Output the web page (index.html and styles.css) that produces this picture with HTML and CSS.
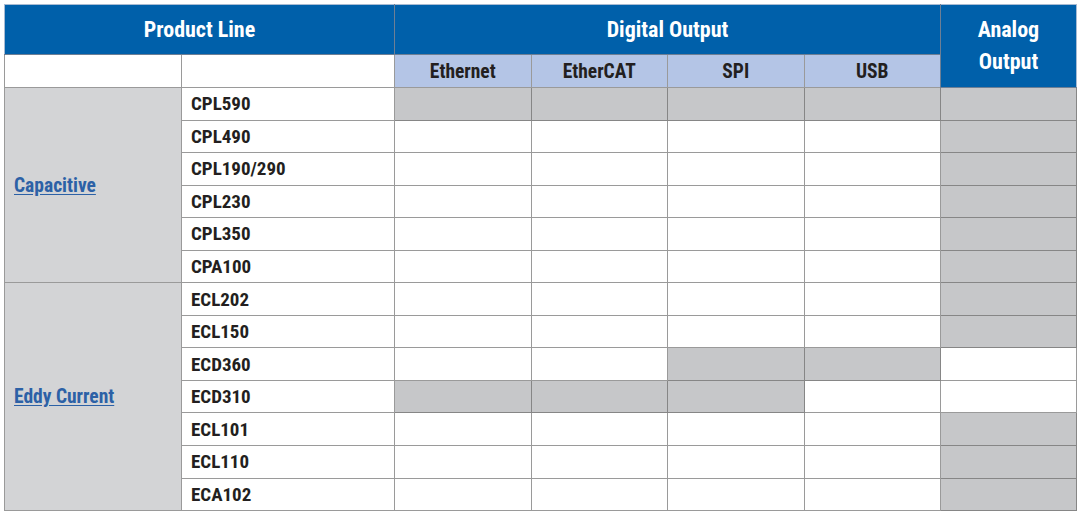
FILE: index.html
```html
<!DOCTYPE html>
<html>
<head>
<meta charset="utf-8">
<link rel="stylesheet" href="styles.css">
</head>
<body>
<table class="grid">
  <colgroup>
    <col class="c-group"><col class="c-model"><col class="c-d"><col class="c-d"><col class="c-d"><col class="c-d"><col class="c-a">
  </colgroup>
  <thead>
    <tr class="h1">
      <th colspan="2" class="blue">Product Line</th>
      <th colspan="4" class="blue">Digital Output</th>
      <th rowspan="2" class="blue analog">Analog<br>Output</th>
    </tr>
    <tr class="h2">
      <th class="blank"></th>
      <th class="blank"></th>
      <th class="sub">Ethernet</th>
      <th class="sub">EtherCAT</th>
      <th class="sub">SPI</th>
      <th class="sub">USB</th>
    </tr>
  </thead>
  <tbody>
    <tr>
      <td rowspan="6" class="group"><a href="#">Capacitive</a></td>
      <td class="model">CPL590</td>
      <td class="g"></td><td class="g"></td><td class="g"></td><td class="g"></td><td class="g"></td>
    </tr>
    <tr><td class="model">CPL490</td><td></td><td></td><td></td><td></td><td class="g"></td></tr>
    <tr><td class="model">CPL190/290</td><td></td><td></td><td></td><td></td><td class="g"></td></tr>
    <tr><td class="model">CPL230</td><td></td><td></td><td></td><td></td><td class="g"></td></tr>
    <tr><td class="model">CPL350</td><td></td><td></td><td></td><td></td><td class="g"></td></tr>
    <tr><td class="model">CPA100</td><td></td><td></td><td></td><td></td><td class="g"></td></tr>
    <tr>
      <td rowspan="7" class="group"><a href="#">Eddy Current</a></td>
      <td class="model">ECL202</td><td></td><td></td><td></td><td></td><td class="g"></td>
    </tr>
    <tr><td class="model">ECL150</td><td></td><td></td><td></td><td></td><td class="g"></td></tr>
    <tr><td class="model">ECD360</td><td></td><td></td><td class="g"></td><td class="g"></td><td></td></tr>
    <tr><td class="model">ECD310</td><td class="g"></td><td class="g"></td><td class="g"></td><td></td><td></td></tr>
    <tr><td class="model">ECL101</td><td></td><td></td><td></td><td></td><td class="g"></td></tr>
    <tr><td class="model">ECL110</td><td></td><td></td><td></td><td></td><td class="g"></td></tr>
    <tr><td class="model">ECA102</td><td></td><td></td><td></td><td></td><td class="g"></td></tr>
  </tbody>
</table>
</body>
</html>
```

FILE: styles.css
```css
html, body {
  margin: 0;
  padding: 0;
  background: #ffffff;
}
body {
  padding: 4px 4px 0 4px;
  font-family: Roboto, "Liberation Sans", sans-serif;
  font-stretch: 75%;
  font-weight: bold;
  color: #231f20;
}
.grid {
  border-collapse: collapse;
  table-layout: fixed;
  width: 1072px;
}
.c-group { width: 177px; }
.c-model { width: 213px; }
.c-d { width: 136.5px; }
.c-a { width: 136px; }

.grid th, .grid td {
  border: 1px solid #9a9a9a;
  padding: 0;
}
.h1 { height: 50px; }
.h2 { height: 33px; }
tbody tr { height: 32.55px; }

.grid .blue {
  background: #0060aa;
  color: #ffffff;
  font-size: 22px;
  font-weight: bold;
  border-color: #6d7f95;
  border-top-color: #a8bbd3;
}
.grid .h1 .blue:first-child { border-left-color: #a8bbd3; }
.grid .analog {
  line-height: 32px;
  border-right-color: #a8bbd3;
}
.grid .blank { background: #ffffff; }
.grid .sub {
  background: #b4c5e6;
  font-size: 19.5px;
  font-weight: bold;
  color: #231f20;
}
.grid .model {
  font-size: 19px;
  text-align: left;
  padding-left: 9px;
}
.grid .group {
  background: #d3d4d6;
  text-align: left;
  padding-left: 9px;
  font-size: 19.5px;
}
.group a {
  color: #2c61a6;
  text-decoration: underline;
  text-underline-offset: 2px;
}
.grid .g {
  background: #c6c7c9;
  border-color: #868686;
}
```
